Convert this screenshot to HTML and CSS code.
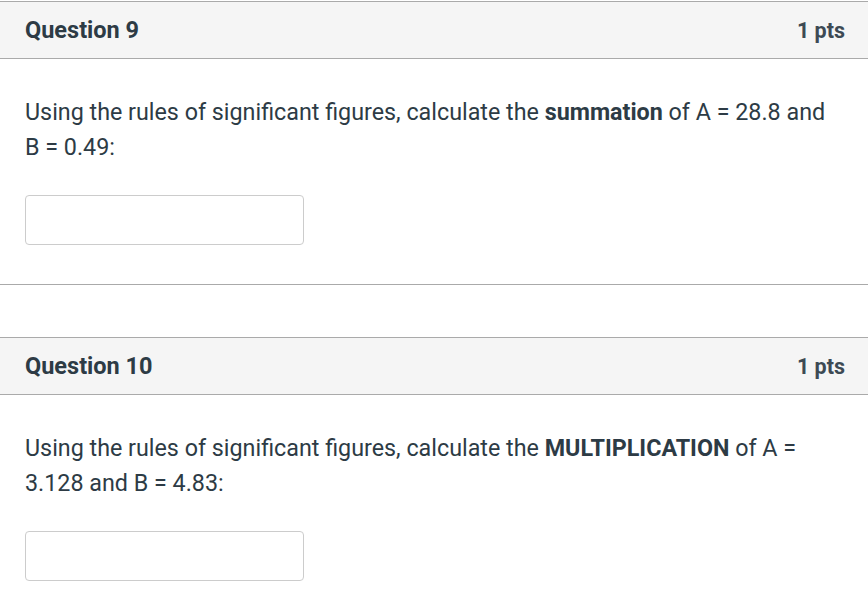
FILE: index.html
```html
<!DOCTYPE html>
<html>
<head>
<meta charset="utf-8">
<link rel="stylesheet" href="styles.css">
</head>
<body>
<div class="quiz">
  <section class="question">
    <header class="q-header">
      <h2 class="q-title">Question 9</h2>
      <span class="q-points">1 pts</span>
    </header>
    <div class="q-body">
      <p class="q-text">Using the rules of significant figures, calculate the <strong>summation</strong> of A = 28.8 and B = 0.49:</p>
      <input class="q-input" type="text">
    </div>
  </section>
  <section class="question">
    <header class="q-header">
      <h2 class="q-title">Question 10</h2>
      <span class="q-points">1 pts</span>
    </header>
    <div class="q-body">
      <p class="q-text">Using the rules of significant figures, calculate the <strong>MULTIPLICATION</strong> of A = 3.128 and B = 4.83:</p>
      <input class="q-input" type="text">
    </div>
  </section>
</div>
</body>
</html>
```
FILE: styles.css
```css
html, body {
  margin: 0;
  padding: 0;
  background: #ffffff;
}
body {
  font-family: Roboto, "Liberation Sans", sans-serif;
  color: #2d3b45;
}
.quiz {
  padding-top: 1px;
  display: flex;
  flex-direction: column;
  gap: 52px;
}
.question {
  border-top: 1px solid #aaaaaa;
  border-bottom: 1px solid #aaaaaa;
}
.q-header {
  height: 56px;
  background: #f5f5f5;
  border-bottom: 1px solid #aaaaaa;
  display: flex;
  align-items: center;
  justify-content: space-between;
  padding: 0 23px 0 25px;
}
.q-title {
  margin: 0;
  font-size: 23.5px;
  font-weight: 700;
}
.q-points {
  font-size: 21.5px;
  font-weight: 700;
  color: #3d4a54;
}
.q-body {
  padding: 36px 25px 39px 25px;
}
.q-text {
  margin: 0;
  font-size: 23.3px;
  line-height: 35px;
}
.q-text strong {
  font-weight: 700;
}
.q-input {
  display: block;
  margin-top: 30px;
  box-sizing: border-box;
  width: 279px;
  height: 50px;
  border: 1px solid #cccccc;
  border-radius: 4px;
  background: #fff;
  padding: 0 10px;
  font-family: inherit;
  font-size: 18px;
}
```
